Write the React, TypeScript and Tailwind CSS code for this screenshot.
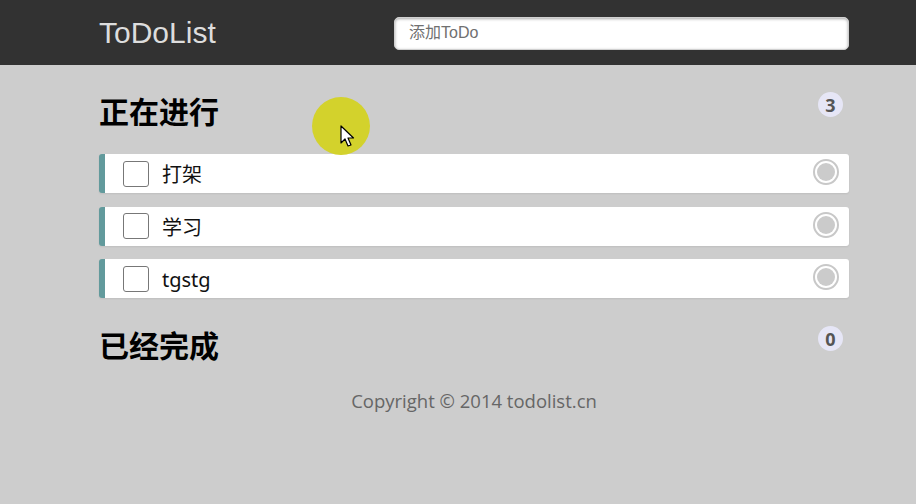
import React from "react";

const cjk = { fontFamily: '"Noto Sans", "Noto Sans CJK SC", sans-serif' };

function Row({ text }: { text: string }) {
  return (
    <li className="relative flex h-[39px] items-center rounded-[3px] border-l-[6px] border-[#629a9c] bg-white shadow-[0_1px_2px_rgba(0,0,0,0.07)]">
      <span className="ml-[18px] box-border h-[26px] w-[26px] rounded-[3px] border border-[#777] bg-white" />
      <span className="ml-[13px] pt-[3px] text-[20px] leading-none text-[#111]" style={cjk}>
        {text}
      </span>
      <span className="absolute right-[10px] top-[5px] box-border flex h-[26px] w-[26px] items-center justify-center rounded-full border-2 border-[#c8c8c8] bg-white">
        <span className="h-[18px] w-[18px] rounded-full bg-[#cbcbcb]" />
      </span>
    </li>
  );
}

function Heading({ title, count }: { title: string; count: number }) {
  return (
    <h2
      className="relative h-[40px] text-[30px] font-bold leading-[40px] text-black"
      style={{ fontFamily: '"Noto Sans CJK SC", sans-serif' }}
    >
      {title}
      <span
        className="absolute right-[6px] top-[2px] flex h-[25px] w-[25px] items-center justify-center rounded-full bg-[#e6e6f6] text-[18px] font-bold text-[#555]"
        style={{ fontFamily: '"Open Sans", sans-serif' }}
      >
        {count}
      </span>
    </h2>
  );
}

export default function App() {
  return (
    <div className="relative min-h-[504px] bg-[#cdcdcd]">
      <header className="h-[65px] bg-[#323232]">
        <div className="ml-[99px] flex h-full w-[750px] items-center justify-between">
          <span
            className="text-[30px] leading-none text-[#dddddd]"
            style={{ fontFamily: '"Liberation Sans", Arial, sans-serif' }}
          >
            ToDoList
          </span>
          <div className="mt-[1px] flex h-[33px] w-[455px] items-center rounded-[5px] border border-[#d0d0d0] bg-white pl-[14px] shadow-[inset_0_1px_3px_rgba(0,0,0,0.35)]">
            <span
              className="text-[16px] text-[#707070]"
              style={{ fontFamily: '"Liberation Sans", "Noto Sans CJK SC", sans-serif' }}
            >
              添加ToDo
            </span>
          </div>
        </div>
      </header>

      <main className="ml-[99px] w-[750px] pt-[25px]">
        <section>
          <Heading title="正在进行" count={3} />
          <ul className="mt-[24px] flex flex-col gap-[13.5px]">
            <Row text="打架" />
            <Row text="学习" />
            <Row text="tgstg" />
          </ul>
        </section>
        <section className="mt-[26px]">
          <Heading title="已经完成" count={0} />
        </section>
        <footer
          className="mt-[25px] text-center text-[18.5px] leading-[24px] text-[#666]"
          style={{ fontFamily: '"Open Sans", sans-serif' }}
        >
          Copyright © 2014 todolist.cn
        </footer>
      </main>

      <div className="absolute left-[312px] top-[97px] h-[58px] w-[58px] rounded-full bg-[#d3d22c]" />
      <svg
        className="absolute left-[340px] top-[125px]"
        width="16"
        height="24"
        viewBox="0 0 16 24"
      >
        <path
          d="M1 1 L1 18 L5 14 L8 21 L11 20 L8 13 L13.5 13 Z"
          fill="white"
          stroke="black"
          strokeWidth="1.2"
          strokeLinejoin="round"
        />
      </svg>
    </div>
  );
}
